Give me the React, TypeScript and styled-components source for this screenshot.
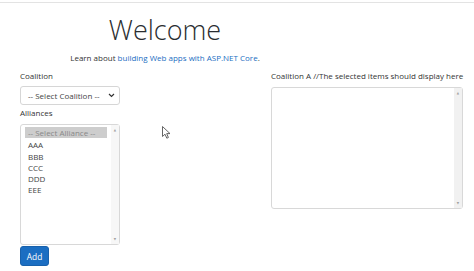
import React from 'react';
import styled, { createGlobalStyle } from 'styled-components';

const GlobalStyle = createGlobalStyle`
  html, body {
    margin: 0;
    padding: 0;
    background: #ffffff;
  }
  body {
    font-family: "Open Sans", "DejaVu Sans", sans-serif;
    color: #212529;
  }
`;

const alliances = ['AAA', 'BBB', 'CCC', 'DDD', 'EEE'];

export default function App() {
  return (
    <>
      <GlobalStyle />
      <Page>
        <NavEdge />
        <Hero>
          <Title>Welcome</Title>
          <Lead>
            Learn about <Link href="#">building Web apps with ASP.NET Core</Link>.
          </Lead>
        </Hero>
        <FormRow>
          <Column>
            <Label>Coalition</Label>
            <Dropdown>
              <span>-- Select Coalition --</span>
              <Chevron viewBox="0 0 8 6" width="7" height="5">
                <path d="M1 1.2 L4 4.2 L7 1.2" fill="none" stroke="#333" strokeWidth="1.4" />
              </Chevron>
            </Dropdown>
            <Label $tight>Alliances</Label>
            <ListBox $height={121}>
              <Options>
                <Option $selected>-- Select Alliance --</Option>
                {alliances.map((a) => (
                  <Option key={a}>{a}</Option>
                ))}
              </Options>
              <ScrollTrack>
                <Arrow>▲</Arrow>
                <Arrow>▼</Arrow>
              </ScrollTrack>
            </ListBox>
            <AddButton>Add</AddButton>
          </Column>
          <Column>
            <Label>Coalition A //The selected items should display here</Label>
            <ListBox $height={122} $shift>
              <Options />
              <ScrollTrack $shaded>
                <Arrow>▲</Arrow>
                <Arrow>▼</Arrow>
              </ScrollTrack>
            </ListBox>
          </Column>
        </FormRow>
        <Cursor viewBox="0 0 9 13" width="9" height="13">
          <path d="M0.5 0.5 L0.5 10.5 L3 8.2 L4.8 12.2 L6.4 11.5 L4.7 7.6 L8 7.6 Z" fill="#fff" stroke="#555" strokeWidth="0.9" />
        </Cursor>
      </Page>
    </>
  );
}

const Page = styled.div`
  position: relative;
  width: 474px;
  height: 271px;
  overflow: hidden;
`;

const NavEdge = styled.div`
  height: 2px;
  border-bottom: 1px solid #e3e3e3;
`;

const Hero = styled.div`
  width: 290px;
  margin-left: 20px;
  text-align: center;
`;

const Title = styled.h1`
  margin: 8px 0 0;
  font-size: 27px;
  font-weight: 300;
  font-stretch: 88%;
  line-height: 38px;
  color: #2a2d30;
`;

const Lead = styled.p`
  margin: 3px 0 0;
  font-size: 8px;
  line-height: 12px;
  color: #333;
`;

const Link = styled.a`
  color: #1b6ec2;
  text-decoration: none;
`;

const FormRow = styled.div`
  display: grid;
  grid-template-columns: 100px 192px;
  column-gap: 151px;
  padding-left: 20px;
  margin-top: 6px;
`;

const Column = styled.div`
  display: flex;
  flex-direction: column;
  align-items: flex-start;
`;

const Label = styled.div<{ $tight?: boolean }>`
  font-size: 8px;
  line-height: 12px;
  color: #333;
  margin-bottom: ${({ $tight }) => ($tight ? '5px' : '4px')};
  white-space: nowrap;
`;

const Dropdown = styled.div`
  box-sizing: border-box;
  width: 100px;
  height: 19px;
  border: 1px solid #d6d6d6;
  border-radius: 3px;
  display: flex;
  align-items: center;
  justify-content: space-between;
  padding: 0 4px 0 7px;
  font-size: 8px;
  color: #444;
  margin-bottom: 2px;
`;

const Chevron = styled.svg`
  display: block;
`;

const ListBox = styled.div<{ $height: number; $shift?: boolean }>`
  box-sizing: border-box;
  width: 100%;
  height: ${({ $height }) => `${$height}px`};
  margin-top: ${({ $shift }) => ($shift ? '1px' : '0')};
  border: 1px solid #d8d8d8;
  border-radius: 3px;
  display: flex;
`;

const Options = styled.div`
  flex: 1;
  padding: 2px 4px;
`;

const Option = styled.div<{ $selected?: boolean }>`
  font-size: 8px;
  line-height: 11.3px;
  padding: 0 3px;
  color: ${({ $selected }) => ($selected ? '#888' : '#444')};
  background: ${({ $selected }) => ($selected ? '#cdcdcd' : 'transparent')};
  margin-bottom: ${({ $selected }) => ($selected ? '1px' : '0')};
`;

const ScrollTrack = styled.div<{ $shaded?: boolean }>`
  width: 8px;
  background: ${({ $shaded }) => ($shaded ? '#f1f1f1' : '#f7f7f7')};
  display: flex;
  flex-direction: column;
  justify-content: space-between;
  align-items: center;
  padding: 3px 0;
`;

const Arrow = styled.span`
  font-size: 3px;
  line-height: 4px;
  color: #a0a0a0;
`;

const AddButton = styled.button`
  margin-top: 1px;
  width: 29px;
  height: 20px;
  padding: 0;
  border: 1px solid #1861ac;
  border-radius: 3px;
  background: #1b6ec2;
  color: #ffffff;
  font-family: inherit;
  font-size: 8.4px;
`;

const Cursor = styled.svg`
  position: absolute;
  left: 162px;
  top: 126px;
`;
